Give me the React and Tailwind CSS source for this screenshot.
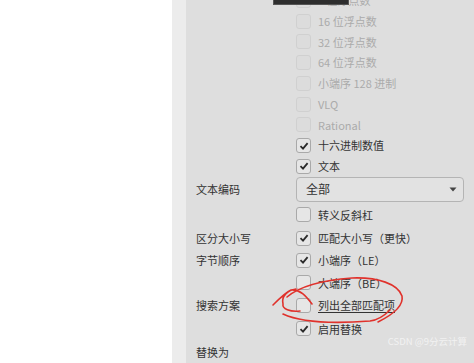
import React from 'react';

const Check = ({ on, disabled }) => (
  <span
    className={`w-[15px] h-[15px] rounded-[3px] border flex items-center justify-center shrink-0 ${
      disabled ? 'border-[#d0d0d0] bg-[#dcdcdc]' : 'border-[#a9a9a9] bg-[#e6e6e6]'
    }`}
  >
    {on && (
      <svg width="10" height="10" viewBox="0 0 10 10">
        <path d="M1.5 5.2 L4 7.6 L8.6 2.2" fill="none" stroke="#2a2a2a" strokeWidth="1.8" />
      </svg>
    )}
  </span>
);

const Row = ({ h, label, children }) => (
  <div className={`flex items-center ${h}`}>
    <div className="w-[110px] pl-[10px] text-[#333] shrink-0">{label}</div>
    <div className="flex items-center gap-[7px] flex-1">{children}</div>
  </div>
);

const Opt = ({ h, label, text, on, disabled, underline }) => (
  <Row h={h} label={label}>
    <Check on={on} disabled={disabled} />
    <span className={`${disabled ? 'text-[#ababab]' : 'text-[#333]'} ${underline ? 'underline underline-offset-2' : ''}`}>
      {text}
    </span>
  </Row>
);

export default function App() {
  return (
    <div
      className="w-[474px] h-[363px] overflow-hidden flex bg-white text-[11px] relative"
      style={{ fontFamily: '"Noto Sans CJK SC", "Noto Sans", sans-serif' }}
    >
      <div className="w-[172px] bg-white" />
      <div className="w-[14px] bg-[#ececec]" />
      <div className="flex-1 bg-[#dedede] flex flex-col">
        <div className="-mt-[10px]">
          <Opt h="h-[20.75px]" text="8 位浮点数" disabled />
          <Opt h="h-[20.75px]" text="16 位浮点数" disabled />
          <Opt h="h-[20.75px]" text="32 位浮点数" disabled />
          <Opt h="h-[20.75px]" text="64 位浮点数" disabled />
          <Opt h="h-[20.75px]" text="小端序 128 进制" disabled />
          <Opt h="h-[20.75px]" text="VLQ" disabled />
          <Opt h="h-[20.75px]" text="Rational" disabled />
          <Opt h="h-[20.75px]" text="十六进制数值" on />
          <Opt h="h-[20.75px]" text="文本" on />
          <Row h="h-[25px]" label="文本编码">
            <div className="w-[168px] h-[25px] rounded-[4px] border border-[#b4b4b4] bg-[#e2e2e2] flex items-center justify-between pl-[9px] pr-[6px] text-[#333] text-[12px]">
              <span>全部</span>
              <svg width="8" height="5" viewBox="0 0 8 5">
                <path d="M0.5 0.5 L7.5 0.5 L4 4.5 Z" fill="#444" />
              </svg>
            </div>
          </Row>
          <Opt h="h-[26px]" text="转义反斜杠" />
          <Opt h="h-[21px]" label="区分大小写" text="匹配大小写（更快）" on />
          <Opt h="h-[23px]" label="字节顺序" text="小端序（LE）" on />
          <Opt h="h-[22px]" text="大端序（BE）" />
          <Opt h="h-[23px]" label="搜索方案" text="列出全部匹配项" underline />
          <Opt h="h-[24px]" text="启用替换" on />
          <Row h="h-[22px]" label="替换为" />
        </div>
      </div>

      {/* tooltip fragment at top */}
      <div className="absolute left-[273px] top-0 w-[76px] h-[5px] bg-[#2e2e2e] border-b border-x border-[#555]" />

      {/* hand-drawn red circle */}
      <svg className="absolute left-0 top-0 pointer-events-none" width="474" height="363">
        <path
          d="M273 305 C280 298 286 292 291 290 C300 289 306 296 312 304 M287 297 C300 286 325 280 352 278 C378 277 398 284 402 296 C404 306 392 315 378 322 M300 311 C290 312 282 309 283 304 C281 296 288 290 296 289 M283 314 C300 322 330 324 370 321 C380 320 386 314 390 310"
          fill="none"
          stroke="#e0322c"
          strokeWidth="1.6"
          strokeLinecap="round"
        />
      </svg>

      <div className="absolute right-[7px] top-[334px] text-[9.5px] text-[#f2f2f2]">CSDN @9分云计算</div>
    </div>
  );
}
